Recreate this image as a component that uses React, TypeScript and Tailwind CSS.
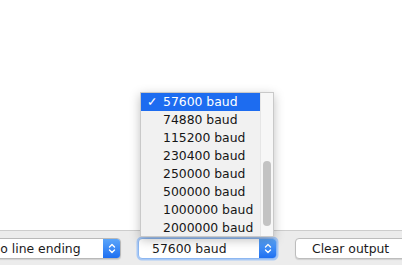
import { ReactNode } from "react";

const rates = [
    "57600 baud",
    "74880 baud",
    "115200 baud",
    "230400 baud",
    "250000 baud",
    "500000 baud",
    "1000000 baud",
    "2000000 baud",
];

function Arrows() {
    return (
        <svg width="8" height="13" viewBox="0 0 8 13" fill="none">
            <path d="M1.5 5 L4 2.5 L6.5 5" stroke="white" strokeWidth="1.4" strokeLinecap="round" strokeLinejoin="round" />
            <path d="M1.5 8 L4 10.5 L6.5 8" stroke="white" strokeWidth="1.4" strokeLinecap="round" strokeLinejoin="round" />
        </svg>
    );
}

function PopUp({ label, width, className, focused }: { label: string; width: string; className?: string; focused?: boolean }) {
    return (
        <div
            className={`flex h-[21px] ${width} shrink-0 items-stretch rounded-[4px] bg-white border ${
                focused ? "border-[#8db7f1] shadow-[0_0_0_1.5px_#a9c9f5]" : "border-[#b9b9b9] shadow-[0_1px_1px_rgba(0,0,0,0.12)]"
            } ${className ?? ""}`}
        >
            <div className="flex-1 whitespace-nowrap pl-[13px] leading-[19px] text-[#1b1b1b]">{label}</div>
            <div className="flex w-[17px] items-center justify-center rounded-r-[3px] bg-gradient-to-b from-[#5aa5fa] to-[#1e6ff1]">
                <Arrows />
            </div>
        </div>
    );
}

function Row({ children, selected }: { children: ReactNode; selected?: boolean }) {
    return (
        <div className={`flex h-[18px] items-center leading-[18px] ${selected ? "bg-[#1d6cf0] text-white" : "text-[#161616]"}`}>
            <span className="w-[22px] pl-[6px]">{selected ? "✓" : ""}</span>
            <span>{children}</span>
        </div>
    );
}

export default function App() {
    return (
        <div
            className="relative flex h-[265px] w-[402px] flex-col overflow-hidden bg-white text-[12.4px]"
            style={{ fontFamily: '"DejaVu Sans", sans-serif' }}
        >
            <div className="h-[230px] bg-white" />
            <div className="flex flex-1 items-start border-t border-[#cdcdcd] bg-[#ececec] pt-[7px]">
                <PopUp label="No line ending" width="w-[144px]" className="ml-[-23px]" />
                <PopUp label="57600 baud" width="w-[139px]" className="ml-[17px]" focused />
                <div className="ml-[18px] h-[21px] w-[130px] shrink-0 whitespace-nowrap rounded-[4px] border border-[#bdbdbd] bg-white pl-[16px] leading-[19px] text-[#1b1b1b] shadow-[0_1px_1px_rgba(0,0,0,0.12)]">
                    Clear output
                </div>
            </div>

            {/* open baud rate menu */}
            <div className="absolute left-[140px] top-[92px] flex h-[145px] w-[134px] border border-[#c9c9c9] bg-[#f1f1f1] shadow-[0_3px_10px_rgba(0,0,0,0.25)]">
                <div className="flex w-[119px] flex-col">
                    {rates.map((r, i) => (
                        <Row key={r} selected={i === 0}>
                            {r}
                        </Row>
                    ))}
                </div>
                <div className="flex flex-1 justify-center border-l border-[#e6e6e6] bg-[#f7f7f7]">
                    <div className="mt-[68px] h-[65px] w-[8px] rounded-full bg-[#c3c3c3]" />
                </div>
            </div>
        </div>
    );
}
